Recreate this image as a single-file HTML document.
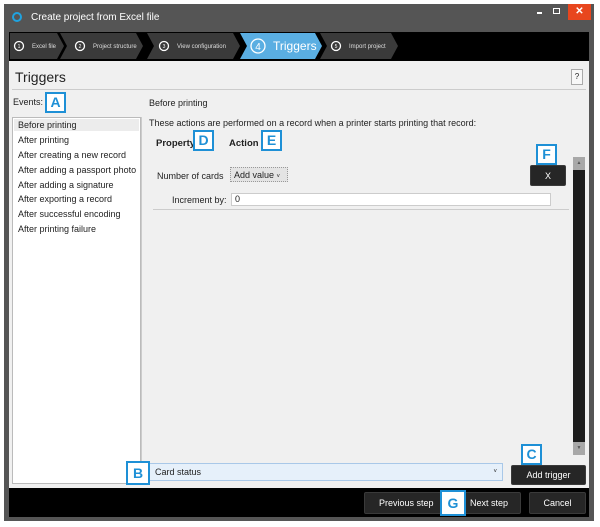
<!DOCTYPE html>
<html><head><meta charset="utf-8"><style>
*{margin:0;padding:0;box-sizing:border-box}
body{width:600px;height:527px;background:#fff;font-family:"Liberation Sans",sans-serif;position:relative;overflow:hidden;font-size:9px;color:#222}
.a{position:absolute}
.lbl{position:absolute;border:2px solid #1e90d6;background:#fff;color:#1e90d6;font-weight:bold;font-size:14px;text-align:center;line-height:17px;width:21px;height:21px}
.btn{position:absolute;background:#262626;color:#fff;border-radius:2px;text-align:center;font-size:9px;border:1px solid #3a3a3a}
.li{position:absolute;left:18px;font-size:9px}
</style></head><body>
<div class="a" style="left:4px;top:4px;width:590px;height:517px;background:#555"></div>
<div class="a" style="left:12px;top:12px;width:10px;height:10px;border:2.5px solid #1fa3e0;border-radius:50%"></div>
<div class="a" style="left:31px;top:12px;color:#fff;font-size:10px">Create project from Excel file</div>
<div class="a" style="left:537px;top:12px;width:5px;height:2px;background:#fff"></div>
<div class="a" style="left:553px;top:8px;width:7px;height:6px;border:1.5px solid #fff"></div>
<div class="a" style="left:568px;top:4px;width:23px;height:16px;background:#e8461e;color:#fff;font-weight:bold;text-align:center;font-size:10px;line-height:16px">✕</div>
<div class="a" style="left:9px;top:32px;width:580px;height:29px;background:#000"></div>
<svg class="a" style="left:0;top:0" width="600" height="62">
<g fill="#3a3a3a"><polygon points="10,33 57,33 64,46 57,59 10,59"/>
<polygon points="60,33 136,33 143,46 136,59 60,59 67,46"/>
<polygon points="147,33 233,33 240,46 233,59 147,59 154,46"/>
<polygon points="320,33 391,33 398,46 391,59 320,59 327,46"/></g>
<polygon fill="#5aaee2" points="240,33 315,33 322,46 315,59 240,59 247,46"/>
<g fill="none" stroke="#fff" stroke-width="1.3"><circle cx="19" cy="46" r="4.5"/><circle cx="80" cy="46" r="4.5"/><circle cx="164" cy="46" r="4.5"/><circle cx="336" cy="46" r="4.5"/><circle cx="258" cy="46" r="7"/></g>
<g fill="#fff" font-family="Liberation Sans" font-size="5" text-anchor="middle"><text x="19" y="48">1</text><text x="80" y="48">2</text><text x="164" y="48">3</text><text x="336" y="48">5</text><text x="258" y="50" font-size="10">4</text></g>
<g fill="#ddd" font-family="Liberation Sans" font-size="6"><text x="32" y="48">Excel file</text><text x="93" y="48">Project structure</text><text x="177" y="48">View configuration</text><text x="349" y="48">Import project</text></g>
<text x="273" y="50" fill="#fff" font-family="Liberation Sans" font-size="12">Triggers</text>
</svg>
<div class="a" style="left:9px;top:61px;width:580px;height:427px;background:#f0f0f0"></div>
<div class="a" style="left:15px;top:69px;font-size:14px;color:#222">Triggers</div>
<div class="a" style="left:571px;top:69px;width:12px;height:16px;border:1px solid #aaa;background:#f8f8f8;font-size:8px;text-align:center;line-height:14px">?</div>
<div class="a" style="left:12px;top:89px;width:574px;height:1px;background:#ccc"></div>
<div class="a" style="left:13px;top:97px">Events:</div>
<div class="lbl" style="left:45px;top:92px">A</div>
<div class="a" style="left:12px;top:117px;width:129px;height:367px;background:#fff;border:1px solid #bbb"></div>
<div class="a" style="left:14px;top:119px;width:125px;height:12px;background:#ececec"></div>
<div class="li" style="top:120px">Before printing</div>
<div class="li" style="top:135px">After printing</div>
<div class="li" style="top:150px">After creating a new record</div>
<div class="li" style="top:165px">After adding a passport photo</div>
<div class="li" style="top:180px">After adding a signature</div>
<div class="li" style="top:194px">After exporting a record</div>
<div class="li" style="top:209px">After successful encoding</div>
<div class="li" style="top:224px">After printing failure</div>
<div class="a" style="left:149px;top:98px">Before printing</div>
<div class="a" style="left:149px;top:118px">These actions are performed on a record when a printer starts printing that record:</div>
<div class="a" style="left:141px;top:117px;width:1px;height:346px;background:#ccc"></div>
<div class="a" style="left:156px;top:138px;font-weight:bold;font-size:9.5px">Property</div>
<div class="lbl" style="left:193px;top:130px">D</div>
<div class="a" style="left:229px;top:138px;font-weight:bold;font-size:9.5px">Action</div>
<div class="lbl" style="left:261px;top:130px">E</div>
<div class="lbl" style="left:536px;top:144px">F</div>
<div class="btn" style="left:530px;top:165px;width:36px;height:21px;line-height:20px">X</div>
<div class="a" style="left:157px;top:171px">Number of cards</div>
<div class="a" style="left:230px;top:167px;width:58px;height:15px;border:1px dotted #999;background:#e4e4e4;padding-left:3px;line-height:14px">Add value <span style="font-size:6px">˅</span></div>
<div class="a" style="left:172px;top:195px">Increment by:</div>
<div class="a" style="left:231px;top:193px;width:320px;height:13px;background:#fff;border:1px solid #ccc;padding-left:3px;line-height:11px">0</div>
<div class="a" style="left:153px;top:209px;width:416px;height:1px;background:#ccc"></div>
<div class="a" style="left:573px;top:157px;width:12px;height:298px;background:#1c1c1c"></div>
<div class="a" style="left:573px;top:157px;width:12px;height:13px;background:#a8a8a8;color:#555;font-size:5px;text-align:center;line-height:12px">▲</div>
<div class="a" style="left:573px;top:442px;width:12px;height:13px;background:#a8a8a8;color:#555;font-size:5px;text-align:center;line-height:12px">▼</div>
<div class="a" style="left:147px;top:463px;width:356px;height:18px;background:#e6f0fa;border:1px solid #a9c8e8;padding-left:7px;line-height:16px">Card status<span style="position:absolute;right:5px;font-size:6px">˅</span></div>
<div class="lbl" style="left:126px;top:461px;width:24px;height:24px;line-height:20px">B</div>
<div class="lbl" style="left:521px;top:444px">C</div>
<div class="btn" style="left:511px;top:465px;width:75px;height:20px;line-height:19px">Add trigger</div>
<div class="a" style="left:9px;top:488px;width:580px;height:29px;background:#000"></div>
<div class="btn" style="left:364px;top:492px;width:78px;height:22px;line-height:21px;text-align:left;padding-left:14px">Previous step</div>
<div class="btn" style="left:441px;top:492px;width:80px;height:22px;line-height:21px;text-align:left;padding-left:28px">Next step</div>
<div class="btn" style="left:529px;top:492px;width:57px;height:22px;line-height:21px">Cancel</div>
<div class="lbl" style="left:440px;top:490px;width:26px;height:26px;line-height:22px">G</div>
</body></html>
